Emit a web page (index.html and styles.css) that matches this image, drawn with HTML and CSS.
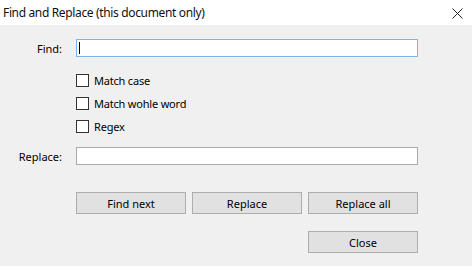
FILE: index.html
```html
<!DOCTYPE html>
<html lang="en">
<head>
    <meta charset="UTF-8">
    <title>Find and Replace</title>
    <link rel="stylesheet" href="styles.css">
</head>
<body>
    <div class="window">
        <div class="titlebar">
            <span class="title">Find and Replace (this document only)</span>
            <span class="close-x">
                <svg width="11" height="11" viewBox="0 0 11 11">
                    <path d="M0.5 0.5 L10.5 10.5 M10.5 0.5 L0.5 10.5" stroke="#222" stroke-width="1" fill="none"/>
                </svg>
            </span>
        </div>

        <div class="content">
            <div class="field-row">
                <label class="field-label">Find:</label>
                <div class="textbox focused"><span class="caret"></span></div>
            </div>

            <div class="options">
                <div class="check"><span class="box"></span>Match case</div>
                <div class="check"><span class="box"></span>Match wohle word</div>
                <div class="check"><span class="box"></span>Regex</div>
            </div>

            <div class="field-row replace-row">
                <label class="field-label">Replace:</label>
                <div class="textbox"></div>
            </div>

            <div class="buttons">
                <div class="btn">Find next</div>
                <div class="btn">Replace</div>
                <div class="btn">Replace all</div>
            </div>

            <div class="buttons close-row">
                <div class="btn">Close</div>
            </div>
        </div>
    </div>
</body>
</html>
```

FILE: styles.css
```css
body {
    margin: 0;
    background-color: #ffffff;
    font-family: "Noto Sans", "DejaVu Sans", sans-serif;
    font-size: 11px;
    color: #000;
}
.window {
    width: 472px;
    height: 266px;
    background-color: #f0f0f0;
}
.titlebar {
    height: 25px;
    background-color: #ffffff;
    display: flex;
    align-items: center;
    justify-content: space-between;
    padding-left: 3px;
    padding-right: 9px;
}
.title {
    font-size: 12px;
    letter-spacing: -0.35px;
    color: #111;
}
.close-x {
    display: flex;
    margin-top: 1px;
}
.content {
    padding-top: 14px;
    padding-left: 76px;
}
.field-row {
    display: flex;
    align-items: center;
    height: 18px;
}
.field-label {
    width: 62px;
    margin-left: -76px;
    margin-right: 14px;
    text-align: right;
}
.textbox {
    width: 340px;
    height: 16px;
    border: 1px solid #a9a9a9;
    background-color: #ffffff;
    display: flex;
    align-items: center;
}
.textbox.focused {
    border-color: #7eb4ea;
}
.caret {
    width: 1px;
    height: 12px;
    background-color: #000;
    margin-left: 2px;
}
.options {
    display: flex;
    flex-direction: column;
    gap: 10px;
    margin-top: 17px;
}
.check {
    display: flex;
    align-items: center;
    height: 13px;
    letter-spacing: -0.2px;
}
.box {
    width: 11px;
    height: 11px;
    border: 1px solid #333;
    background-color: #fff;
    margin-right: 5px;
}
.replace-row {
    margin-top: 14px;
}
.buttons {
    display: flex;
    justify-content: space-between;
    width: 342px;
    margin-top: 27px;
}
.close-row {
    justify-content: flex-end;
    margin-top: 17px;
}
.btn {
    width: 108px;
    height: 20px;
    border: 1px solid #adadad;
    background-color: #e1e1e1;
    display: flex;
    align-items: center;
    justify-content: center;
}
```
